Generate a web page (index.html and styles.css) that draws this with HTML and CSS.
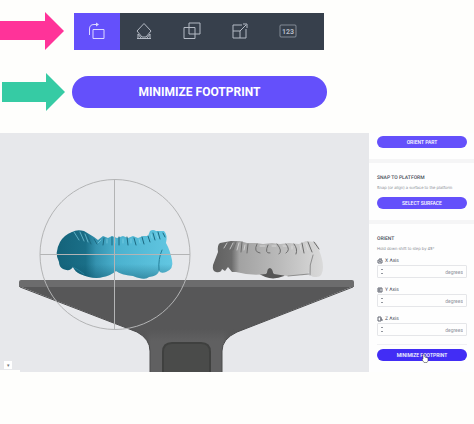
FILE: index.html
```html
<!DOCTYPE html>
<html lang="en">
<head>
    <meta charset="utf-8">
    <title>Minimize Footprint</title>
    <link rel="stylesheet" href="styles.css">
</head>
<body>
    <div class="callouts">
        <div class="callout">
            <svg class="arrow pink" viewBox="0 0 65 38"><path d="M0 9H45V0L64 19L45 38V28H0Z"/></svg>
            <div class="toolbar">
                <button class="tool active" aria-label="Orient">
                    <svg viewBox="0 0 18 18"><path d="M1.500 13V7Q1.500 2.500 6 2.500H9M5 7.500H16V16.500H5Z"/><path class="solid" d="M8 0.500L11 2.500L8 4.500Z"/></svg>
                </button>
                <button class="tool" aria-label="Supports">
                    <svg viewBox="0 0 18 18"><path d="M9 1.500L16 9L11 15H7L2 9ZM2 16.500H16M3 16V12L6 16M15 16V12L12 16"/></svg>
                </button>
                <button class="tool" aria-label="Layout">
                    <svg viewBox="0 0 18 18"><path d="M6 1H17V12H6ZM1 5.500H12V16.500H1Z"/></svg>
                </button>
                <button class="tool" aria-label="Scale">
                    <svg viewBox="0 0 18 18"><path d="M11 3H2V16H15V7M2 9H9V16M9 9L15 3M12 2H16V6"/></svg>
                </button>
                <button class="tool" aria-label="Label">
                    <svg viewBox="0 0 18 18"><rect x="1" y="3" width="16" height="12" rx="1" opacity=".6"/><text x="9" y="12">123</text></svg>
                </button>
            </div>
        </div>
        <div class="callout">
            <svg class="arrow green" viewBox="0 0 65 38"><path d="M2 9H46V0L65 19L46 38V29H2Z"/></svg>
            <button class="pill large">MINIMIZE FOOTPRINT</button>
        </div>
    </div>

    <main class="viewer">
        <div class="stage">
            <svg class="scene" viewBox="0 0 369 239" preserveAspectRatio="xMidYMid slice">
                <defs>
                    <linearGradient id="blue">
                        <stop offset="0" stop-color="#14637a"/>
                        <stop offset=".25" stop-color="#1a6f88"/>
                        <stop offset=".34" stop-color="#3593b0"/>
                        <stop offset=".52" stop-color="#4bb2cf"/>
                        <stop offset="1" stop-color="#62c7e2"/>
                    </linearGradient>
                    <linearGradient id="shade" x1="0" y1="0" x2="0" y2="1">
                        <stop offset=".6" stop-color="#06465b" stop-opacity="0"/>
                        <stop offset="1" stop-color="#06465b" stop-opacity=".4"/>
                    </linearGradient>
                    <linearGradient id="grey">
                        <stop offset="0" stop-color="#606060"/>
                        <stop offset=".17" stop-color="#6c6c6c"/>
                        <stop offset=".24" stop-color="#a2a2a2"/>
                        <stop offset=".6" stop-color="#bababa"/>
                        <stop offset="1" stop-color="#dadada"/>
                    </linearGradient>
                    <linearGradient id="stem">
                        <stop offset="0" stop-color="#4b4b4c"/>
                        <stop offset=".14" stop-color="#606061"/>
                        <stop offset=".86" stop-color="#606061"/>
                        <stop offset="1" stop-color="#4b4b4c"/>
                    </linearGradient>
                    <linearGradient id="neck" x1="0" y1="0" x2="0" y2="1">
                        <stop offset="0" stop-color="#575758"/>
                        <stop offset="1" stop-color="#575758" stop-opacity="0"/>
                    </linearGradient>
                </defs>

                <!-- build platform -->
                <path fill="#575758" d="M19 153H354L237 199Q222 206 222 218V239H150V218Q150 206 137 199L19 153Z"/>
                <path fill="url(#stem)" d="M150 239V216Q149 204 137 196H237Q223 204 222 216V239Z"/>
                <path fill="url(#neck)" d="M130 196L137 199Q143 202 147 208H225Q229 203 237 199L244 196Z"/>
                <path fill="none" stroke="#4c4c4d" d="M20 154L137 199Q150 206 150 218V239M353 154L237 199Q222 206 222 218V239"/>
                <path fill="#6c6c6d" d="M19 149Q19 147 21 147H352Q354 147 354 149V154H19Z"/>
                <path fill="#4a4b4a" stroke="#3f403f" stroke-width="2" d="M163 241V219Q163 210 172 210H201Q210 210 210 219V241Z"/>

                <!-- selected part -->
                <path fill="url(#blue)" d="M72 99Q77 96 84 98L89 101L94 104L98 107L103 103L108 105L112 103L117 105L123 103L128 105L133 103L138 105L143 103L148 103L150 98Q153 96 156 98L164 98Q168 102 166 110Q170 117 172 127Q174 136 166 139Q161 141 159 138Q158 143 149 144Q145 148 133 143Q121 142 116 138Q110 143 103 144Q94 147 80 141Q75 139 73 134Q70 139 63 136Q59 134 59 129Q54 120 60 109Q64 102 72 99Z"/>
                <path fill="url(#shade)" d="M59 126Q54 120 60 109L166 110Q170 117 172 127Q174 136 166 139Q161 141 159 138Q158 143 149 144Q145 148 133 143Q121 142 116 138Q110 143 103 144Q94 147 80 141Q75 139 73 134Q70 139 63 136Z"/>
                <g fill="none" stroke="#1b6880" stroke-linecap="round">
                    <path d="M72 100L76 106M77 99L81 107M82 99L86 109M87 102L91 111M94 106L97 111M104 105L103 112M112 104V112M119 104V112M127 104L128 112M134 105L136 112M142 104L144 111M148 103L150 109M153 100L155 107M158 99L160 106M163 100L165 104"/>
                    <path stroke="#267f9a" d="M159 137Q158 126 162 117M73 134Q79 137 84 141"/>
                </g>
                <g fill="none" stroke="#8bd9eb" stroke-linecap="round" opacity=".6">
                    <path d="M74 99L79 107M80 99L84 108M85 101L88 109M98 110L101 107M107 106V110M115 106V110M123 106V110M131 106V110M139 106L140 110M151 101L152 105M156 100L158 105"/>
                </g>

                <!-- second part -->
                <path fill="#555" d="M232 136L258 140Q270 149 284 143L288 136Z"/>
                <path fill="url(#grey)" d="M220 110L231 108L240 108L247 110L256 110L263 111L272 110L280 111L289 110L299 111L306 108L315 109Q319 112 319 117Q323 127 323 134Q323 145 315 144Q310 144 309 139Q307 143 300 142L287 143L274 141L270 136L266 141Q251 143 236 139L232 139L228 134L225 138L222 136Q221 140 216 139Q212 138 213 132L218 119Q217 112 220 110Z"/>
                <g fill="none" stroke="#6c6c6c" stroke-linecap="round">
                    <path d="M230 109L226 117M236 109L233 117M242 109L241 119M248 111L247 120M257 111Q253 119 260 120M268 112Q264 121 270 120M277 111Q283 118 279 121M286 111Q291 117 286 120M294 111Q298 116 296 121M302 110L304 120M308 109L312 119M314 109L319 116"/>
                    <path stroke="#8e8e8e" d="M310 142Q309 132 313 122M309 141L288 143"/>
                </g>
                <g fill="none" stroke="#e2e2e2" stroke-linecap="round" opacity=".7">
                    <path d="M227 110L224 115M233 110L230 116M239 110L237 117M245 112L244 117M260 113H265M272 113H276M283 113H286M292 113V116M300 112L301 117M306 111L308 117"/>
                </g>
                <path fill="#565656" d="M267 141Q267 135 270 135Q273 136 273 141Z"/>

                <!-- rotation gizmo -->
                <path fill="none" stroke="#b3b4b5" d="M40 121.500H190M114.500 46V197"/>
                <circle fill="none" stroke="#b3b4b5" cx="115" cy="121.500" r="75"/>
            </svg>
            <div class="status-strip"></div>
            <button class="expand" aria-label="Expand">▾</button>
        </div>

        <aside class="panel">
            <section>
                <button class="pill">ORIENT PART</button>
            </section>
            <section class="snap">
                <h2>SNAP TO PLATFORM</h2>
                <p>Snap (or align) a surface to the platform</p>
                <button class="pill">SELECT SURFACE</button>
            </section>
            <section class="orient">
                <h2>ORIENT</h2>
                <p>Hold down shift to step by 45°</p>
                <div class="axis">
                    <label for="x-axis"><svg viewBox="0 0 6 6"><path d="M1 2H5V5H1ZM2 1H5M2 3L4 4"/></svg>X Axis</label>
                    <div class="field"><span class="stepper"></span><input id="x-axis" type="text" placeholder="degrees"></div>
                </div>
                <div class="axis">
                    <label for="y-axis"><svg viewBox="0 0 6 6"><path d="M1 1H5V5H1ZM3 1V5M1 3H3"/></svg>Y Axis</label>
                    <div class="field"><span class="stepper"></span><input id="y-axis" type="text" placeholder="degrees"></div>
                </div>
                <div class="axis">
                    <label for="z-axis"><svg viewBox="0 0 6 6"><path d="M1 1H4V5H1ZM3 3H5V5"/></svg>Z Axis</label>
                    <div class="field"><span class="stepper"></span><input id="z-axis" type="text" placeholder="degrees"></div>
                </div>
                <div class="footprint">
                    <button class="pill pressed">MINIMIZE FOOTPRINT</button>
                    <svg class="cursor" viewBox="0 0 8 10"><path d="M2 6V1.500Q3 .5 3.800 1.500V4L7 5V8L6 9.500H3L1 6.500Z"/></svg>
                </div>
            </section>
        </aside>
    </main>
</body>
</html>
```
FILE: styles.css
```css
* {
    box-sizing: border-box;
}

body {
    margin: 0;
    background-color: #fefefc;
    font-family: Roboto, "Liberation Sans", sans-serif;
}

button {
    border: none;
    padding: 0;
    font-family: inherit;
    cursor: pointer;
}

/* Callouts above the viewer */
.callouts {
    display: flex;
    flex-direction: column;
    gap: 23px;
    padding: 12px 0 22px;
}

.callout {
    display: flex;
    align-items: center;
    gap: 7px;
    height: 38px;
}

.arrow {
    width: 65px;
    height: 38px;
}

.pink {
    fill: #ff3399;
}

.green {
    fill: #36cba4;
}

.toolbar {
    display: flex;
    width: 250px;
    height: 37px;
    margin-left: 2px;
    background-color: #37404c;
}

.tool {
    display: flex;
    align-items: center;
    justify-content: center;
    width: 48px;
    background-color: transparent;
    color: #b4bac4;
}

.tool.active {
    width: 46px;
    background-color: #6450fb;
    color: #ddd8ff;
}

.tool svg {
    width: 18px;
    height: 18px;
    fill: none;
    stroke: currentColor;
}

.tool .solid {
    fill: currentColor;
    stroke: none;
}

.tool text {
    fill: currentColor;
    stroke: none;
    font-size: 7px;
    font-weight: 700;
    text-anchor: middle;
}

.pill {
    display: block;
    width: 100%;
    height: 12px;
    border-radius: 16px;
    background-color: #6450fb;
    color: #fff;
    font-size: 5px;
    font-weight: 500;
    line-height: 12px;
    text-align: center;
}

.pill.large {
    width: 255px;
    height: 32px;
    font-size: 12px;
    font-weight: 700;
}

.pill.pressed {
    background-color: #422df5;
}

/* Viewer */
.viewer {
    display: grid;
    grid-template-columns: 1fr 105px;
}

.stage {
    position: relative;
    min-height: 239px;
    background-color: #e7e8eb;
}

.scene {
    position: absolute;
    width: 100%;
    height: 100%;
}

.status-strip {
    position: absolute;
    left: 0;
    bottom: 0;
    width: 20px;
    height: 2px;
    background-color: #fefefc;
}

.expand {
    position: absolute;
    left: 4px;
    bottom: 3px;
    width: 8px;
    height: 8px;
    background-color: #fff;
    color: #777;
    font-size: 5px;
    line-height: 8px;
}

/* Side panel */
.panel {
    display: flex;
    flex-direction: column;
    gap: 4px;
    background-color: #f5f5f6;
    color: #454c58;
    font-size: 5px;
    line-height: 6px;
    text-rendering: geometricPrecision;
}

.panel section {
    padding: 3px 7px 11px 8px;
    background-color: #fefefe;
}

.panel h2 {
    margin: 0 0 4px;
    font-size: 5px;
    font-weight: 500;
    line-height: 6px;
}

.panel p {
    margin: 0;
    color: #858992;
    font-family: Inter, "Liberation Sans", sans-serif;
    font-size: 4px;
    white-space: nowrap;
}

.panel .snap {
    padding-top: 12px;
}

.snap .pill {
    margin-top: 6px;
}

.panel .orient {
    padding-top: 12px;
}

.orient p {
    margin-bottom: 5px;
}

.axis {
    margin-bottom: 8px;
}

.axis label {
    display: flex;
    align-items: center;
    gap: 2px;
    height: 8px;
}

.axis svg {
    width: 6px;
    height: 6px;
    fill: none;
    stroke: #626772;
}

.field {
    display: flex;
    align-items: center;
    height: 13px;
    padding: 0 3px;
    border: 1px solid #e5e6e9;
    border-radius: 1px;
}

.stepper {
    display: flex;
    flex-direction: column;
    gap: 3px;
}

.stepper::before,
.stepper::after {
    content: "";
    width: 2px;
    height: 1px;
    background-color: #92969e;
}

.field input {
    width: 100%;
    min-width: 0;
    padding: 0;
    border: none;
    outline: none;
    background: none;
    color: #454c58;
    font-family: inherit;
    font-size: 5px;
    text-align: right;
}

.field input::placeholder {
    color: #92969e;
}

.footprint {
    position: relative;
    padding-top: 4px;
    border-top: 1px solid #f1f1f3;
}

.cursor {
    position: absolute;
    left: 44px;
    top: 8px;
    width: 8px;
    height: 10px;
    fill: #fff;
    stroke: #333;
    stroke-width: 0.5px;
}
```
